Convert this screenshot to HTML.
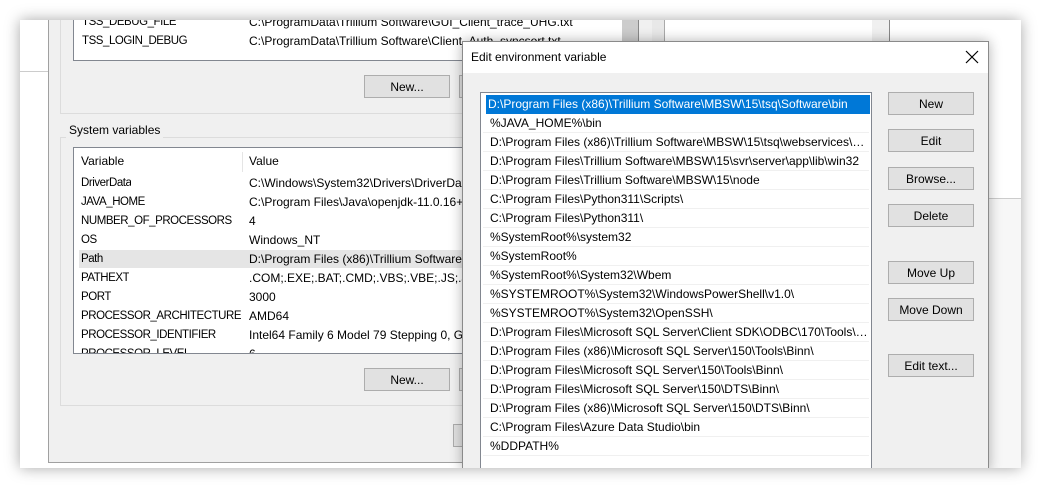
<!DOCTYPE html>
<html><head><style>
*{margin:0;padding:0;box-sizing:border-box}
body{width:1041px;height:488px;background:#fff;position:relative;overflow:hidden;font-family:"Liberation Sans",sans-serif;font-size:12px;color:#000}
.a{position:absolute}
.shot{left:20px;top:20px;width:1001px;height:448px;background:#fff;box-shadow:0 0 14px rgba(0,0,0,.35);overflow:hidden}
.t{position:absolute;white-space:nowrap;overflow:hidden;line-height:19px}
.v{font-size:11.5px;letter-spacing:-0.45px}
.btn{position:absolute;background:#e1e1e1;border:1px solid #adadad;text-align:center;line-height:22px;height:23px;width:86px}
.row{position:absolute;left:2px;width:386px;height:19px;border-bottom:1px solid #f0f0f0;padding-left:7px;line-height:18px;white-space:nowrap;overflow:hidden;text-overflow:ellipsis}
</style></head><body>
<div class="a shot">
 <div class="a" style="left:0;top:51px;width:28px;height:1px;background:#ccc"></div>
 <div class="a" style="left:28px;top:0;width:1px;height:442px;background:#a0a0a0"></div>
 <div class="a" style="left:29px;top:0;width:573px;height:442px;background:#f0f0f0"></div>
 <div class="a" style="left:28px;top:442px;width:420px;height:1px;background:#a0a0a0"></div>
 <div class="a" style="left:40px;top:0;width:560px;height:94px;border:1px solid #dcdcdc;border-top:none"></div>
 <div class="a" style="left:53px;top:0;width:550px;height:41px;background:#fff;border:1px solid #828790;border-top:none"></div>
 <div class="t v" style="left:62px;top:-7px">TSS_DEBUG_FILE</div>
 <div class="t" style="left:229px;top:-7px">C:\ProgramData\Trillium Software\GUI_Client_trace_UHG.txt</div>
 <div class="t v" style="left:62px;top:12px">TSS_LOGIN_DEBUG</div>
 <div class="t" style="left:229px;top:12px">C:\ProgramData\Trillium Software\Client_Auth_syncsort.txt</div>
 <div class="btn" style="left:344px;top:55px">New...</div>
 <div class="btn" style="left:439px;top:55px"></div>
 <div class="a" style="left:40px;top:117px;width:560px;height:269px;border:1px solid #dcdcdc"></div>
 <div class="t" style="left:46px;top:101px;background:#f0f0f0;padding:0 3px">System variables</div>
 <div class="a" style="left:53px;top:127px;width:550px;height:207px;background:#fff;border:1px solid #828790;overflow:hidden">
  <div class="a" style="left:168px;top:4px;width:1px;height:20px;background:#e5e5e5"></div>
  <div class="a" style="left:5px;top:102px;width:540px;height:18px;background:#e5e5e5"></div>
  <div class="t" style="left:7px;top:4px">Variable</div><div class="t" style="left:175px;top:4px">Value</div>
  <div class="t v" style="left:7px;top:26px">DriverData</div><div class="t" style="left:175px;top:26px">C:\Windows\System32\Drivers\DriverData</div>
  <div class="t v" style="left:7px;top:45px">JAVA_HOME</div><div class="t" style="left:175px;top:45px">C:\Program Files\Java\openjdk-11.0.16+8</div>
  <div class="t v" style="left:7px;top:64px">NUMBER_OF_PROCESSORS</div><div class="t" style="left:175px;top:64px">4</div>
  <div class="t v" style="left:7px;top:83px">OS</div><div class="t" style="left:175px;top:83px">Windows_NT</div>
  <div class="t v" style="left:7px;top:102px">Path</div><div class="t" style="left:175px;top:102px">D:\Program Files (x86)\Trillium Software\MBSW</div>
  <div class="t v" style="left:7px;top:121px">PATHEXT</div><div class="t" style="left:175px;top:121px">.COM;.EXE;.BAT;.CMD;.VBS;.VBE;.JS;.JSE;.WSF</div>
  <div class="t v" style="left:7px;top:140px">PORT</div><div class="t" style="left:175px;top:140px">3000</div>
  <div class="t v" style="left:7px;top:159px">PROCESSOR_ARCHITECTURE</div><div class="t" style="left:175px;top:159px">AMD64</div>
  <div class="t v" style="left:7px;top:178px">PROCESSOR_IDENTIFIER</div><div class="t" style="left:175px;top:178px">Intel64 Family 6 Model 79 Stepping 0, GenuineIntel</div>
  <div class="t v" style="left:7px;top:197px">PROCESSOR_LEVEL</div><div class="t" style="left:175px;top:197px">6</div>
 </div>
 <div class="btn" style="left:344px;top:348px">New...</div>
 <div class="btn" style="left:439px;top:348px"></div>
 <div class="btn" style="left:433px;top:404px"></div>
 <div class="a" style="left:602px;top:0;width:16px;height:442px;background:#ccc"></div>
 <div class="a" style="left:618px;top:0;width:1px;height:442px;background:#888"></div>
 <div class="a" style="left:619px;top:0;width:25px;height:442px;background:#f0f0f0"></div>
 <div class="a" style="left:632px;top:0;width:12px;height:442px;background:#e8e8e8"></div>
 <div class="a" style="left:644px;top:0;width:1px;height:442px;background:#aaa"></div>
 <div class="a" style="left:852px;top:0;width:17px;height:442px;background:#f0f0f0"></div>
 <div class="a" style="left:869px;top:0;width:1px;height:442px;background:#888"></div>
 <div class="a" style="left:870px;top:178px;width:131px;height:1px;background:#ccc"></div>
 <div class="a" style="left:870px;top:179px;width:131px;height:270px;background:#f7f7f7"></div>
 <div class="a" style="left:442px;top:21px;width:527px;height:430px;background:#f0f0f0;border:1px solid #8a8a8a;box-shadow:0 0 12px rgba(0,0,0,.3)">
  <div class="a" style="left:0;top:0;width:525px;height:31px;background:#fff"></div>
  <div class="t" style="left:8px;top:6px">Edit environment variable</div>
  <svg class="a" style="left:502px;top:8px" width="14" height="14"><path d="M1 1L13 13M13 1L1 13" stroke="#000" stroke-width="1.2"/></svg>
  <div class="a" style="left:17px;top:50px;width:392px;height:390px;background:#fff;border:1px solid #828790">
   <div class="row" style="top:2px;left:5px;width:384px;padding-left:2px;background:#0078d7;color:#fff;border:none">D:\Program Files (x86)\Trillium Software\MBSW\15\tsq\Software\bin</div>
   <div class="row" style="top:21px">%JAVA_HOME%\bin</div>
   <div class="row" style="top:40px">D:\Program Files (x86)\Trillium Software\MBSW\15\tsq\webservices\Trillium</div>
   <div class="row" style="top:59px">D:\Program Files\Trillium Software\MBSW\15\svr\server\app\lib\win32</div>
   <div class="row" style="top:78px">D:\Program Files\Trillium Software\MBSW\15\node</div>
   <div class="row" style="top:97px">C:\Program Files\Python311\Scripts\</div>
   <div class="row" style="top:116px">C:\Program Files\Python311\</div>
   <div class="row" style="top:135px">%SystemRoot%\system32</div>
   <div class="row" style="top:154px">%SystemRoot%</div>
   <div class="row" style="top:173px">%SystemRoot%\System32\Wbem</div>
   <div class="row" style="top:192px">%SYSTEMROOT%\System32\WindowsPowerShell\v1.0\</div>
   <div class="row" style="top:211px">%SYSTEMROOT%\System32\OpenSSH\</div>
   <div class="row" style="top:230px">D:\Program Files\Microsoft SQL Server\Client SDK\ODBC\170\Tools\Binn\</div>
   <div class="row" style="top:249px">D:\Program Files (x86)\Microsoft SQL Server\150\Tools\Binn\</div>
   <div class="row" style="top:268px">D:\Program Files\Microsoft SQL Server\150\Tools\Binn\</div>
   <div class="row" style="top:287px">D:\Program Files\Microsoft SQL Server\150\DTS\Binn\</div>
   <div class="row" style="top:306px">D:\Program Files (x86)\Microsoft SQL Server\150\DTS\Binn\</div>
   <div class="row" style="top:325px">C:\Program Files\Azure Data Studio\bin</div>
   <div class="row" style="top:344px">%DDPATH%</div>
  </div>
  <div class="btn" style="left:425px;top:50px">New</div>
  <div class="btn" style="left:425px;top:87px">Edit</div>
  <div class="btn" style="left:425px;top:125px">Browse...</div>
  <div class="btn" style="left:425px;top:162px">Delete</div>
  <div class="btn" style="left:425px;top:219px">Move Up</div>
  <div class="btn" style="left:425px;top:256px">Move Down</div>
  <div class="btn" style="left:425px;top:312px">Edit text...</div>
 </div>
</div>
</body></html>
